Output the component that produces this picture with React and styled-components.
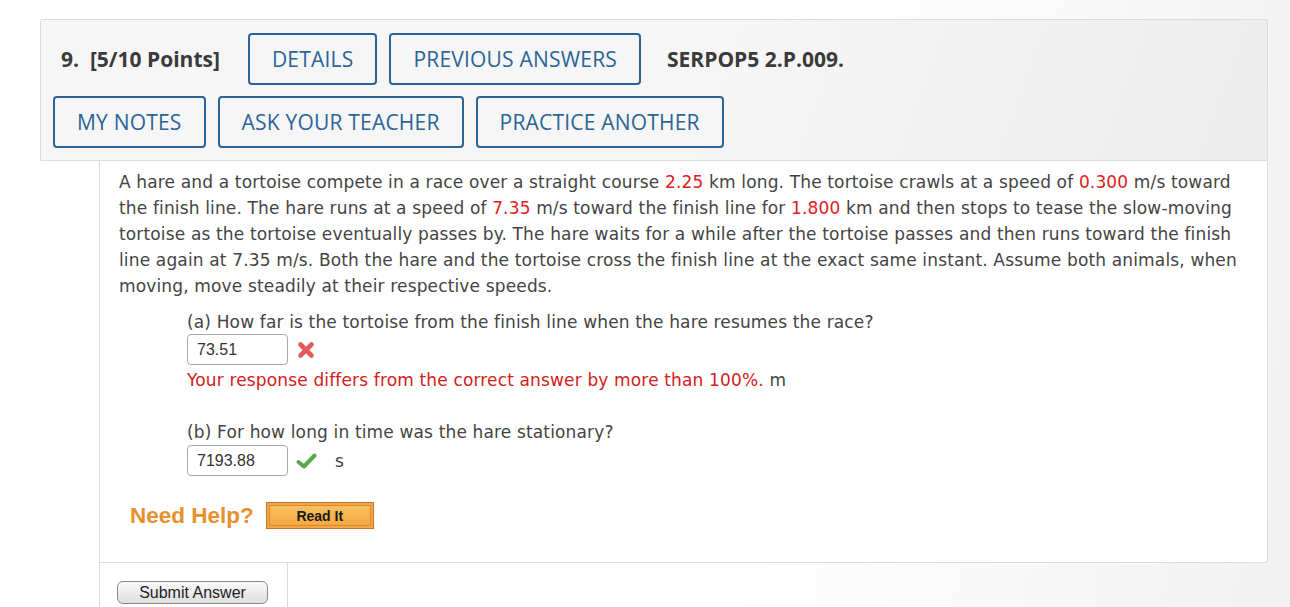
import styled, { createGlobalStyle } from "styled-components"

const Global = createGlobalStyle`
  html, body {
    margin: 0;
    padding: 0;
  }
  body {
    background: linear-gradient(100deg, #ffffff 60%, #f1f1f1 100%);
    min-height: 607px;
    overflow: hidden;
  }
`

const Page = styled.div`
  padding-top: 19px;
  width: 1290px;
`

const Header = styled.div`
  margin-left: 40px;
  width: 1228px;
  box-sizing: border-box;
  background: linear-gradient(110deg, #f6f6f6 55%, #ececec 100%);
  border: 1px solid #dcdcdc;
  border-radius: 2px 2px 0 0;
  padding: 13px 12px 12px;
  display: flex;
  flex-direction: column;
  gap: 11px;
`

const Row = styled.div`
  display: flex;
  align-items: center;
  gap: 12px;
`

const Title = styled.div`
  font-family: "Open Sans", sans-serif;
  font-weight: 700;
  font-size: 21px;
  color: #3a3a3a;
  padding-left: ${p => p.$pad || 0}px;
  margin-right: ${p => p.$right || 0}px;
  white-space: pre;
`

const Tab = styled.div`
  height: 52px;
  box-sizing: border-box;
  border: 2px solid #2c6496;
  border-radius: 4px;
  padding: 0 22px;
  display: flex;
  align-items: center;
  font-family: "Open Sans", sans-serif;
  font-size: 21px;
  letter-spacing: 0.2px;
  color: #2c6496;
  background: #f6f6f6;
`

const Body = styled.div`
  margin-left: 99px;
  width: 1169px;
  box-sizing: border-box;
  border: 1px solid #dddddd;
  border-top: none;
  border-radius: 0 0 4px 0;
  padding: 8px 20px 33px 19px;
  font-family: Verdana, "DejaVu Sans", sans-serif;
  font-size: 17px;
  letter-spacing: 0.15px;
  line-height: 26px;
  color: #444;
  background: #fff;
`

const Red = styled.span`
  color: #e0201c;
`

const Part = styled.div`
  margin-left: 68px;
  margin-top: ${p => p.$top || 0}px;
`

const Answer = styled.div`
  display: flex;
  align-items: center;
  gap: 8px;
  margin-top: ${p => p.$top ?? -1}px;
`

const Field = styled.div`
  width: 101px;
  height: 31px;
  box-sizing: border-box;
  border: 1px solid #a9a9a9;
  border-radius: 4px;
  padding-left: 9px;
  display: flex;
  align-items: center;
  font-family: "Liberation Sans", Arial, sans-serif;
  font-size: 16px;
  letter-spacing: 0;
  color: #333;
`

const Unit = styled.span`
  color: #444;
  margin-left: ${p => p.$left || 0}px;
`

const Feedback = styled.div`
  color: #d42020;
  margin-top: 2px;
`

const Help = styled.div`
  display: flex;
  align-items: center;
  gap: 12px;
  margin-top: 26px;
  margin-left: 11px;
`

const HelpLabel = styled.span`
  font-family: "Liberation Sans", Arial, sans-serif;
  font-weight: 700;
  font-size: 22.5px;
  letter-spacing: 0;
  color: #e8902e;
`

const ReadIt = styled.div`
  width: 108px;
  height: 27px;
  box-sizing: border-box;
  border: 1px solid #c0772e;
  background: #f5a640;
  padding: 2px;
  display: flex;
  span {
    flex: 1;
    border: 1px solid #d68a3a;
    background: linear-gradient(#f9c060, #f4a940);
    display: flex;
    align-items: center;
    justify-content: center;
    font-family: "Liberation Sans", Arial, sans-serif;
    font-weight: 700;
    font-size: 14px;
    letter-spacing: 0;
    color: #1a1a1a;
  }
`

const Footer = styled.div`
  margin-left: 99px;
  width: 189px;
  height: 50px;
  box-sizing: border-box;
  border-left: 1px solid #dddddd;
  border-right: 1px solid #dddddd;
  padding: 18px 0 0 17px;
`

const Submit = styled.div`
  width: 151px;
  height: 23px;
  box-sizing: border-box;
  border: 1px solid #8a8a8a;
  border-radius: 6px;
  background: linear-gradient(#fafafa, #dedede);
  display: flex;
  align-items: center;
  justify-content: center;
  font-family: "Liberation Sans", Arial, sans-serif;
  font-size: 16px;
  color: #222;
`

const Cross = () => (
  <svg width="20" height="20" viewBox="0 0 20 20">
    <path d="M4.5 4.5 L15.5 15.5 M15.5 4.5 L4.5 15.5" stroke="#e45a5c" strokeWidth="4.6" strokeLinecap="round" />
  </svg>
)

const Check = () => (
  <svg width="21" height="18" viewBox="0 0 21 18">
    <path d="M2.5 10 L8 14.5 L18.5 3.5" fill="none" stroke="#5aa84a" strokeWidth="4" strokeLinecap="round" strokeLinejoin="round" />
  </svg>
)

export default function App() {
  return (
    <Page>
      <Global />
      <Header>
        <Row>
          <Title $pad={8} $right={16}>{"9.  [5/10 Points]"}</Title>
          <Tab>DETAILS</Tab>
          <Tab>PREVIOUS ANSWERS</Tab>
          <Title $pad={14}>SERPOP5 2.P.009.</Title>
        </Row>
        <Row>
          <Tab>MY NOTES</Tab>
          <Tab>ASK YOUR TEACHER</Tab>
          <Tab>PRACTICE ANOTHER</Tab>
        </Row>
      </Header>
      <Body>
        <div>
          A hare and a tortoise compete in a race over a straight course <Red>2.25</Red> km long. The tortoise crawls at a speed of <Red>0.300</Red> m/s toward the finish line. The hare runs at a speed of <Red>7.35</Red> m/s toward the finish line for <Red>1.800</Red> km and then stops to tease the slow-moving tortoise as the tortoise eventually passes by. The hare waits for a while after the tortoise passes and then runs toward the finish line again at 7.35 m/s. Both the hare and the tortoise cross the finish line at the exact same instant. Assume both animals, when moving, move steadily at their respective speeds.
        </div>
        <Part $top={10}>
          <div>(a) How far is the tortoise from the finish line when the hare resumes the race?</div>
          <Answer>
            <Field>73.51</Field>
            <Cross />
          </Answer>
          <Feedback>
            Your response differs from the correct answer by more than 100%. <Unit>m</Unit>
          </Feedback>
        </Part>
        <Part $top={26}>
          <div>(b) For how long in time was the hare stationary?</div>
          <Answer $top={0}>
            <Field>7193.88</Field>
            <Check />
            <Unit $left={10}>s</Unit>
          </Answer>
        </Part>
        <Help>
          <HelpLabel>Need Help?</HelpLabel>
          <ReadIt><span>Read It</span></ReadIt>
        </Help>
      </Body>
      <Footer>
        <Submit>Submit Answer</Submit>
      </Footer>
    </Page>
  )
}
